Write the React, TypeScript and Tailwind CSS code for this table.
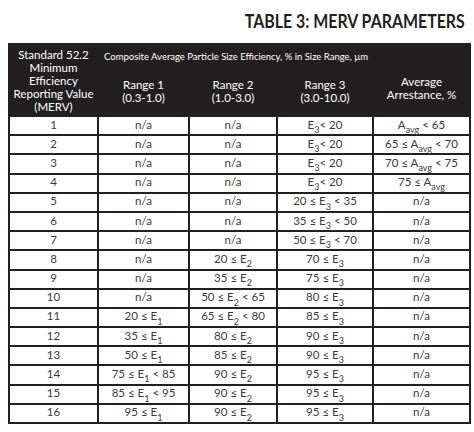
import React from "react";

const E = ({ n }: { n: number }) => (
  <span>
    E<sub className="text-[9px] relative top-[1px] align-sub">{n}</sub>
  </span>
);

const A = () => (
  <span>
    A<sub className="text-[9px] relative top-[1px] align-sub">avg</sub>
  </span>
);

const rows: React.ReactNode[][] = [
  ["1", "n/a", "n/a", <><E n={3} />&lt; 20</>, <><A /> &lt; 65</>],
  ["2", "n/a", "n/a", <><E n={3} />&lt; 20</>, <>65 ≤ <A /> &lt; 70</>],
  ["3", "n/a", "n/a", <><E n={3} />&lt; 20</>, <>70 ≤ <A /> &lt; 75</>],
  ["4", "n/a", "n/a", <><E n={3} />&lt; 20</>, <>75 ≤ <A /></>],
  ["5", "n/a", "n/a", <>20 ≤ <E n={3} /> &lt; 35</>, "n/a"],
  ["6", "n/a", "n/a", <>35 ≤ <E n={3} /> &lt; 50</>, "n/a"],
  ["7", "n/a", "n/a", <>50 ≤ <E n={3} /> &lt; 70</>, "n/a"],
  ["8", "n/a", <>20 ≤ <E n={2} /></>, <>70 ≤ <E n={3} /></>, "n/a"],
  ["9", "n/a", <>35 ≤ <E n={2} /></>, <>75 ≤ <E n={3} /></>, "n/a"],
  ["10", "n/a", <>50 ≤ <E n={2} /> &lt; 65</>, <>80 ≤ <E n={3} /></>, "n/a"],
  ["11", <>20 ≤ <E n={1} /></>, <>65 ≤ <E n={2} /> &lt; 80</>, <>85 ≤ <E n={3} /></>, "n/a"],
  ["12", <>35 ≤ <E n={1} /></>, <>80 ≤ <E n={2} /></>, <>90 ≤ <E n={3} /></>, "n/a"],
  ["13", <>50 ≤ <E n={1} /></>, <>85 ≤ <E n={2} /></>, <>90 ≤ <E n={3} /></>, "n/a"],
  ["14", <>75 ≤ <E n={1} /> &lt; 85</>, <>90 ≤ <E n={2} /></>, <>95 ≤ <E n={3} /></>, "n/a"],
  ["15", <>85 ≤ <E n={1} /> &lt; 95</>, <>90 ≤ <E n={2} /></>, <>95 ≤ <E n={3} /></>, "n/a"],
  ["16", <>95 ≤ <E n={1} /></>, <>90 ≤ <E n={2} /></>, <>95 ≤ <E n={3} /></>, "n/a"],
];

export default function App() {
  return (
    <div className="w-[474px] h-[432px] bg-white font-['Lato',sans-serif] pt-[11px]">
      <div className="flex justify-end pr-[9px]">
        <h1 className="text-[18.5px] leading-[20px] font-bold text-[#231f20] scale-x-[0.86] origin-right">
          TABLE 3: MERV PARAMETERS
        </h1>
      </div>

      <table className="ml-[8px] mt-[12px] w-[461px] table-fixed border-collapse text-[#3a3a3a] text-[11.5px]">
        <colgroup>
          <col className="w-[89px]" />
          <col className="w-[91px]" />
          <col className="w-[88px]" />
          <col className="w-[96px]" />
          <col className="w-[97px]" />
        </colgroup>
        <thead className="bg-[#231f20] text-white">
          <tr className="h-[20px]">
            <th
              rowSpan={2}
              className="font-normal text-[11.5px] leading-[13px] pt-[3px] pb-[2px] align-top border-2 border-[#231f20]"
            >
              Standard 52.2
              <br />
              Minimum
              <br />
              Efficiency
              <br />
              Reporting Value
              <br />
              (MERV)
            </th>
            <th
              colSpan={4}
              className="font-normal text-[9.5px] text-left pl-[5px] align-top pt-[5px] border-2 border-[#231f20]"
            >
              Composite Average Particle Size Efficiency, % in Size Range, µm
            </th>
          </tr>
          <tr className="h-[50px]">
            <th className="font-normal text-[11.5px] leading-[13px] pt-[1px] border-2 border-[#231f20]">
              Range 1<br />(0.3-1.0)
            </th>
            <th className="font-normal text-[11.5px] leading-[13px] pt-[1px] border-2 border-[#231f20]">
              Range 2<br />(1.0-3.0)
            </th>
            <th className="font-normal text-[11.5px] leading-[13px] pt-[1px] border-2 border-[#231f20]">
              Range 3<br />(3.0-10.0)
            </th>
            <th className="font-normal text-[11.5px] leading-[13px] pb-[6px] border-2 border-[#231f20]">
              Average
              <br />
              Arrestance, %
            </th>
          </tr>
        </thead>
        <tbody>
          {rows.map((r, i) => (
            <tr key={i} className="h-[19.2px]">
              {r.map((c, j) => (
                <td
                  key={j}
                  className="border-2 border-[#231f20] text-center leading-[14px] p-0 pb-[2px] whitespace-nowrap"
                >
                  {c}
                </td>
              ))}
            </tr>
          ))}
        </tbody>
      </table>
    </div>
  );
}
